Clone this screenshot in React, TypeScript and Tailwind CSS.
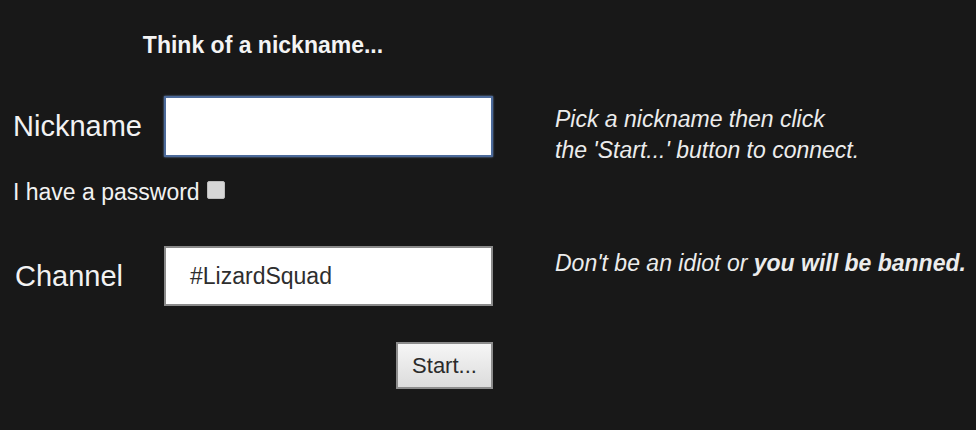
import React from "react";

const App = () => {
    return (
        <div className="w-[976px] h-[430px] overflow-hidden bg-[#181818] text-[#f2f2f2] font-['Liberation_Sans',Arial,sans-serif]">
            <div className="pt-[33px]">
                <div className="w-[526px] text-center text-[23px] leading-[24px] font-bold text-[#f4f4f4]">
                    Think of a nickname...
                </div>
            </div>

            <div className="mt-[39px] h-[61px] grid grid-cols-[164px_329px_1fr] items-start">
                <div className="h-[61px] pl-[13px] flex items-center text-[29px] leading-none">
                    Nickname
                </div>
                <input
                    type="text"
                    className="h-[61px] w-[329px] bg-white border-2 border-[#4c6a9a] rounded-[1px] outline-none shadow-[0_0_2px_#7fa2d8]"
                />
                <div className="pl-[62px] pt-[8px] italic text-[23px] leading-[31px] text-[#ececec] whitespace-nowrap">
                    <div>Pick a nickname then click</div>
                    <div>the 'Start...' button to connect.</div>
                </div>
            </div>

            <div className="mt-[23px] pl-[13px] flex items-center gap-[7px] h-[24px]">
                <span className="text-[23px] leading-[24px]">I have a password</span>
                <span className="w-[18px] h-[18px] -mt-[4px] bg-[#d6d6d6] rounded-[2px] border border-[#bbbbbb]"></span>
            </div>

            <div className="mt-[42px] h-[60px] grid grid-cols-[164px_329px_1fr] items-start">
                <div className="h-[60px] pl-[15px] flex items-center text-[29px] leading-none">
                    Channel
                </div>
                <div className="h-[60px] w-[329px] bg-white border-2 border-[#8a8a8a] flex items-center pl-[24px] text-[23px] text-[#2e2e2e]">
                    #LizardSquad
                </div>
                <div className="pl-[62px] pt-[3px] italic text-[23px] leading-[28px] text-[#ececec] whitespace-nowrap">
                    Don't be an idiot or <span className="font-bold">you will be banned.</span>
                </div>
            </div>

            <div className="mt-[36px] w-[493px] flex justify-end">
                <button className="h-[47px] w-[97px] border-2 border-[#8c8c8c] bg-gradient-to-b from-[#f6f6f6] to-[#dcdcdc] text-[22px] text-[#2b2b2b]">
                    Start...
                </button>
            </div>
        </div>
    );
};

export default App;
